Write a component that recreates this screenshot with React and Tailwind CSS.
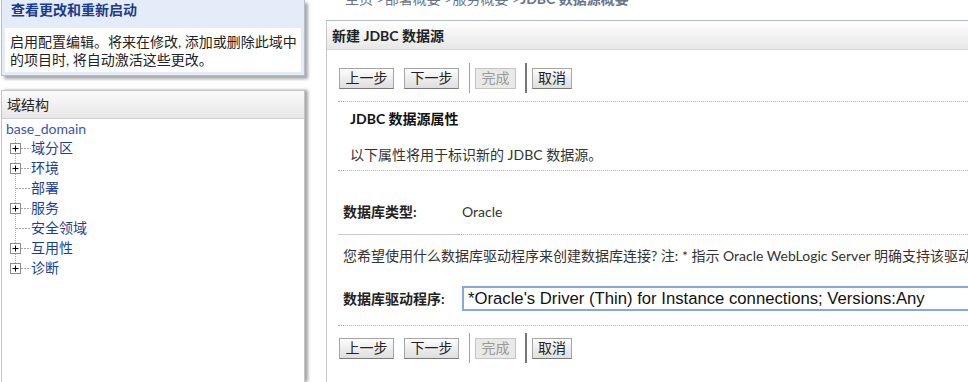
import React from "react";

function TreeIcon({ plus, last }) {
  return (
    <svg width="28" height="20" viewBox="0 0 28 20" className="shrink-0">
      <line x1="12.5" y1={0} x2="12.5" y2={last ? 10 : 20} stroke="#a8a8a8" strokeDasharray="1 1" />
      <line x1={plus ? 18 : 13} y1="10.5" x2="28" y2="10.5" stroke="#a8a8a8" strokeDasharray="2 1" />
      {plus && (
        <g>
          <rect x="7.5" y="5.5" width="10" height="10" fill="#fff" stroke="#8c8c8c" />
          <line x1="9.5" y1="10.5" x2="15.5" y2="10.5" stroke="#000" />
          <line x1="12.5" y1="7.5" x2="12.5" y2="13.5" stroke="#000" />
        </g>
      )}
    </svg>
  );
}

function Btn({ children, w, disabled }) {
  return (
    <div
      className={
        "h-[21px] flex items-center justify-center border text-[14px] leading-[16px] " +
        w +
        (disabled
          ? " border-[#c4c4c4] bg-[#e9e9e6] text-[#9a9a9a]"
          : " border-[#a6a6a6] border-b-[#7a7a7a] bg-gradient-to-b from-[#fdfdfd] to-[#dedede] text-[#222]")
      }
    >
      {children}
    </div>
  );
}

function ButtonRow() {
  return (
    <div className="h-[30px] flex items-center ml-[1px]">
      <Btn w="w-[55px]">上一步</Btn>
      <div className="w-[10px]" />
      <Btn w="w-[55px]">下一步</Btn>
      <div className="w-[10px]" />
      <div className="w-[1px] h-[30px] bg-[#a0a0a0]" />
      <div className="w-[5px]" />
      <Btn w="w-[41px]" disabled>完成</Btn>
      <div className="w-[9px]" />
      <div className="w-[2px] h-[30px] bg-[#777]" />
      <div className="w-[5px]" />
      <Btn w="w-[40px]">取消</Btn>
    </div>
  );
}

function Dotted() {
  return <div className="border-t border-dotted border-[#b8b8b8]" />;
}

export default function App() {
  const tree = [
    { t: "域分区", plus: true },
    { t: "环境", plus: true },
    { t: "部署", plus: false },
    { t: "服务", plus: true },
    { t: "安全领域", plus: false },
    { t: "互用性", plus: true },
    { t: "诊断", plus: true, last: true },
  ];
  return (
    <div className="w-[968px] h-[382px] overflow-hidden bg-white flex font-['Lato','Noto_Sans_CJK_SC',sans-serif] text-[14px] text-[#333]">
      {/* left column */}
      <div className="w-[305px] shrink-0 flex flex-col">
        <div className="ml-[1px] border-l border-r border-b border-[#b7bec9] bg-[#e4ebf9] shadow-[3px_3px_3px_rgba(0,0,0,0.35)] pb-[3px]">
          <div className="h-[28px] pt-[2px] px-[9px] leading-[16px] font-bold text-[#1a3c8c]">
            查看更改和重新启动
          </div>
          <div className="mx-[3px] bg-white px-[5px] pt-[5px] pb-[3px] leading-[18px] text-[#222] whitespace-nowrap overflow-hidden">
            <div>启用配置编辑。将来在修改, 添加或删除此域中</div>
            <div>的项目时, 将自动激活这些更改。</div>
          </div>
        </div>
        <div className="mt-[14px] ml-[1px] flex-1 border border-b-0 border-[#c4c4c4] shadow-[3px_0_3px_rgba(0,0,0,0.35)] bg-white">
          <div className="h-[28px] flex items-center px-[5px] bg-gradient-to-b from-[#fbfbfb] to-[#e7e7e7] border-b border-[#d0d0d0] text-[#222]">
            域结构
          </div>
          <div className="pl-[4px]">
            <div className="h-[19px] flex items-center text-[#3656b0]">base_domain</div>
            {tree.map((r) => (
              <div key={r.t} className="h-[20px] flex items-center -ml-[3px]">
                <TreeIcon plus={r.plus} last={r.last} />
                <span className="text-[#1c3f96] leading-[20px]">{r.t}</span>
              </div>
            ))}
          </div>
        </div>
      </div>

      {/* right column */}
      <div className="flex-1 min-w-0 pl-[21px] flex flex-col overflow-hidden whitespace-nowrap">
        <div className="h-[20px] overflow-hidden pl-[19px]">
          <div className="-mt-[9px] leading-[16px] text-[#6a7588]">
            主页 &gt;部署概要 &gt;服务概要 &gt;<span className="font-bold">JDBC 数据源概要</span>
          </div>
        </div>
        <div className="flex-1 border-t border-l border-t-[#b4bfcc] border-l-[#c8c8c8] w-[680px]">
          <div className="h-[29px] flex items-center pl-[5px] bg-gradient-to-b from-white to-[#e6e7e6] border-b border-[#d6d6d6] font-bold text-[#222]">
            新建 JDBC 数据源
          </div>
          <div className="pl-[11px]">
            <div className="mt-[13px]">
              <ButtonRow />
            </div>
            <div className="mt-[8px]">
              <Dotted />
            </div>
            <div className="pl-[12px] pt-[8px] leading-[18px] font-bold text-[#111]">JDBC 数据源属性</div>
            <div className="pl-[12px] mt-[18px] leading-[18px] text-[#333]">以下属性将用于标识新的 JDBC 数据源。</div>
            <div className="mt-[6px]">
              <Dotted />
            </div>
            <div className="mt-[32px] flex items-center leading-[18px] pl-[5px]">
              <div className="w-[119px] font-bold text-[#222]">数据库类型:</div>
              <div className="text-[#333]">Oracle</div>
            </div>
            <div className="mt-[13px] flex">
              <div className="w-[120px] border-t border-[#c8c8c8]" />
              <div className="flex-1 border-t border-dotted border-[#b8b8b8]" />
            </div>
            <div className="mt-[12px] pl-[5px] leading-[18px] text-[#333]">
              您希望使用什么数据库驱动程序来创建数据库连接? 注: * 指示 Oracle WebLogic Server 明确支持该驱动程序。
            </div>
            <div className="mt-[21px] flex items-center pl-[5px]">
              <div className="w-[119px] font-bold text-[#222]">数据库驱动程序:</div>
              <div className="h-[25px] flex-1 flex items-center border-2 border-[#86a8e2] pl-[4px] font-['Liberation_Sans',Arial,sans-serif] text-[16.7px] text-[#111]">
                *Oracle's Driver (Thin) for Instance connections; Versions:Any
              </div>
            </div>
            <div className="mt-[14px]">
              <Dotted />
            </div>
            <div className="mt-[7px]">
              <ButtonRow />
            </div>
          </div>
        </div>
      </div>
    </div>
  );
}
